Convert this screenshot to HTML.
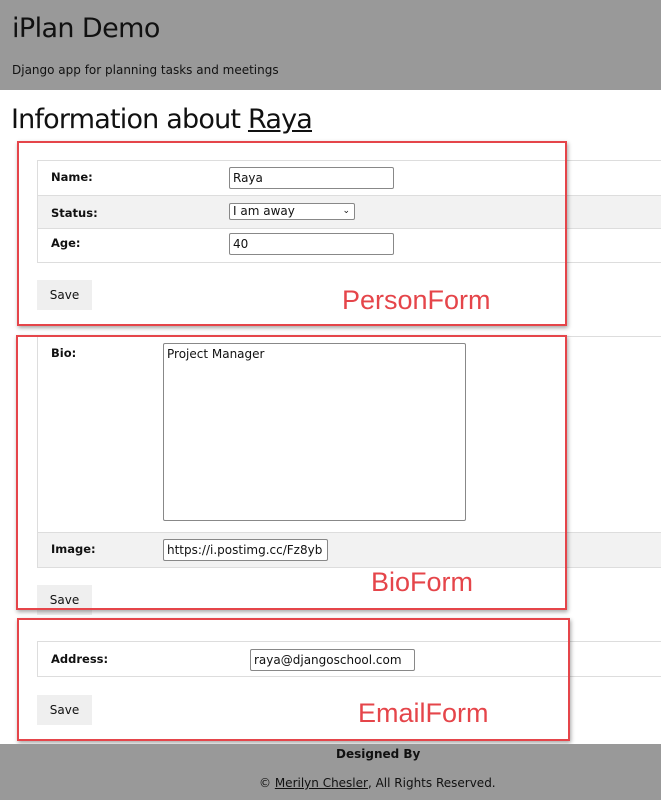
<!DOCTYPE html>
<html><head><meta charset="utf-8"><style>
*{box-sizing:border-box;margin:0;padding:0}
body{width:661px;height:800px;position:relative;overflow:hidden;background:#fff;font-family:"DejaVu Sans","Liberation Sans",sans-serif;color:#111}
.a{position:absolute;white-space:nowrap}
.hdr{left:0;top:0;width:661px;height:90px;background:#999}
.ftr{left:0;top:744px;width:661px;height:56px;background:#999}
.tb{position:absolute;left:37px;width:640px;border:1px solid #ddd}
.lbl{font-weight:bold;font-size:11.5px}
.in{position:absolute;border:1px solid #888;border-radius:2px;background:#fff;font-size:12px;padding:3px 3px;height:22px;overflow:hidden;white-space:nowrap}
.btn{position:absolute;left:37px;width:55px;height:30px;background:#efefef;font-size:12px;text-align:center;line-height:30px}
.red{position:absolute;border:2px solid #e5454a;box-shadow:1px 2px 4px rgba(0,0,0,.35)}
.rl{position:absolute;color:#e5454a;font-family:"Liberation Sans",sans-serif;font-size:27px}
</style></head><body>
<div class="a hdr"></div>
<div class="a" style="left:12px;top:13px;font-size:27px;letter-spacing:-0.6px">iPlan Demo</div>
<div class="a" style="left:12px;top:63px;font-size:12px">Django app for planning tasks and meetings</div>
<div class="a" style="left:11px;top:104px;font-size:27px;letter-spacing:-0.8px">Information about <u>Raya</u></div>

<div class="tb" style="top:160px;height:103px"></div>
<div class="a" style="left:38px;top:195px;width:640px;height:34px;background:#f2f2f2;border-top:1px solid #ddd;border-bottom:1px solid #ddd"></div>
<div class="a lbl" style="left:51px;top:170px">Name:</div>
<div class="a lbl" style="left:51px;top:206px">Status:</div>
<div class="a lbl" style="left:51px;top:236px">Age:</div>
<div class="in" style="left:229px;top:167px;width:165px">Raya</div>
<div class="in" style="left:229px;top:203px;width:126px;height:17px;padding:0 3px;font-size:12px;line-height:15px">I am away<span style="position:absolute;right:4px;top:0;font-size:9px">&#8964;</span></div>
<div class="in" style="left:229px;top:233px;width:165px">40</div>
<div class="btn" style="top:280px">Save</div>

<div class="tb" style="top:336px;height:232px"></div>
<div class="a" style="left:38px;top:532px;width:640px;height:35px;background:#f2f2f2;border-top:1px solid #ddd"></div>
<div class="a lbl" style="left:51px;top:346px">Bio:</div>
<div class="a lbl" style="left:51px;top:542px">Image:</div>
<div class="in" style="left:163px;top:343px;width:303px;height:178px;white-space:normal">Project Manager</div>
<div class="in" style="left:163px;top:539px;width:165px">https://i.postimg.cc/Fz8yb</div>
<div class="btn" style="top:585px">Save</div>

<div class="tb" style="top:641px;height:36px"></div>
<div class="a lbl" style="left:51px;top:652px">Address:</div>
<div class="in" style="left:250px;top:649px;width:165px">raya@djangoschool.com</div>
<div class="btn" style="top:695px">Save</div>

<div class="red" style="left:17px;top:141px;width:550px;height:185px"></div>
<div class="red" style="left:16px;top:335px;width:551px;height:275px"></div>
<div class="red" style="left:17px;top:618px;width:553px;height:123px"></div>
<div class="rl" style="left:342px;top:285px">PersonForm</div>
<div class="rl" style="left:371px;top:567px">BioForm</div>
<div class="rl" style="left:358px;top:698px">EmailForm</div>

<div class="a ftr"></div>
<div class="a lbl" style="left:336px;top:747px;font-size:12px">Designed By</div>
<div class="a" style="left:259px;top:776px;font-size:12px">© <u>Merilyn Chesler</u>, All Rights Reserved.</div>
</body></html>
